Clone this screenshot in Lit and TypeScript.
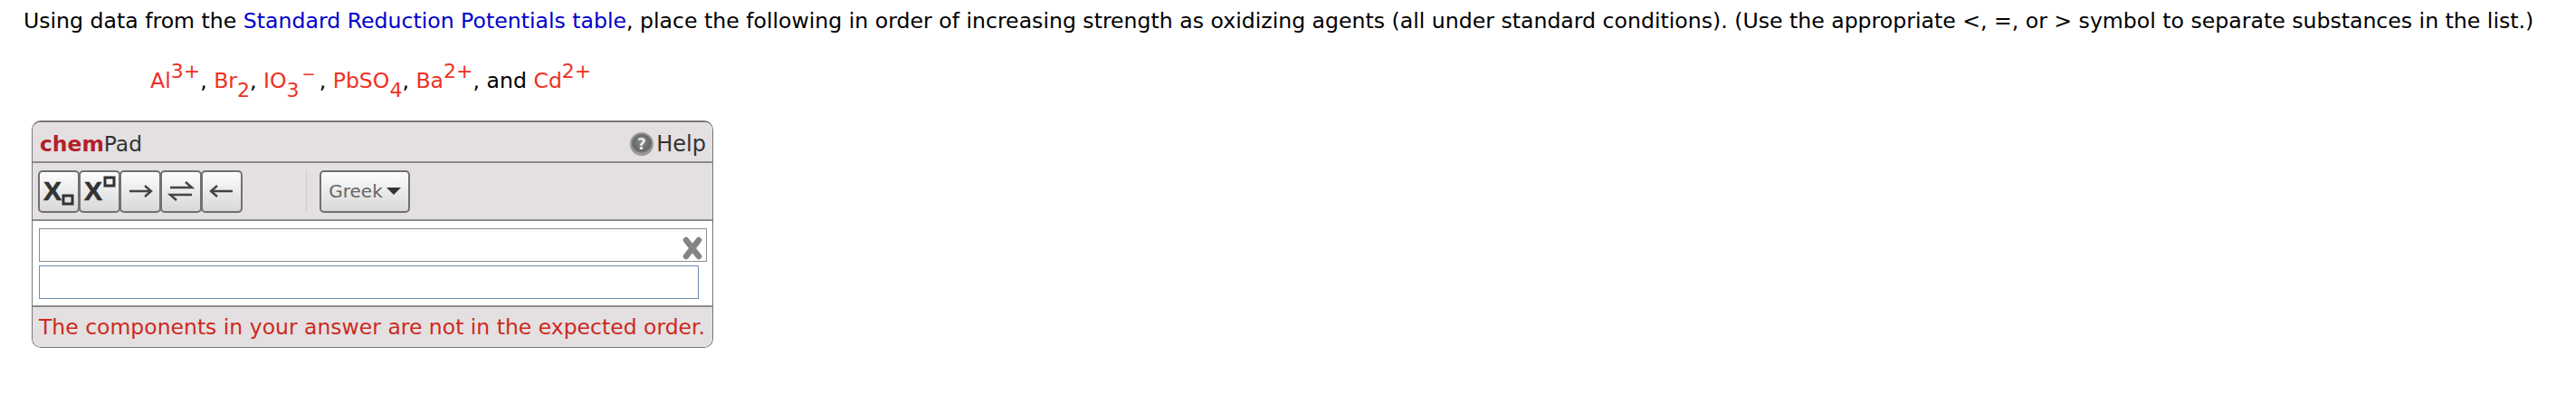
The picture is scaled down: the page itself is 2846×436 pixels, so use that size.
import { LitElement, html, css } from "lit";
import { customElement } from "lit/decorators.js";

@customElement("app-root")
export class AppRoot extends LitElement {
  static styles = css`
    :host { display: block; width: 2846px; height: 436px; background: #fff; color: #000; font-family: "DejaVu Sans", Verdana, sans-serif; font-size: 23.6px; overflow: hidden; }
    .question { margin: 0; padding: 8px 0 0 26px; line-height: 30px; white-space: nowrap; height: 38px; box-sizing: border-box; }
    .link { color: #0000cc; text-decoration: none; }
    .list { margin: 0; padding: 36px 0 0 166px; height: 95px; box-sizing: border-box; line-height: 30px; white-space: nowrap; }
    .r { color: #ee3124; }
    sup, sub { font-size: 22px; line-height: 0; }
    sup { vertical-align: 11px; }
    sub { vertical-align: -10px; }
    .minus { font-size: 18px; vertical-align: 9px; line-height: 0; margin-left: 3px; margin-right: 4px; }
    .panel { margin-left: 35px; width: 753px; box-sizing: border-box; border: 1px solid #777; border-top-width: 2px; border-radius: 10px; background: #fff; overflow: hidden; }
    .head { display: flex; align-items: center; justify-content: space-between; height: 45px; padding: 4px 7px 0 8px; box-sizing: border-box; background: #e4e0e2; border-bottom: 2px solid #8c8c8c; font-size: 23.4px; color: #333; }
    .head b { color: #b3202a; font-weight: 700; }
    .help { display: flex; align-items: center; gap: 3px; font-size: 24px; }
    .tools { display: flex; align-items: center; height: 64px; padding: 0 0 0 6px; background: #e4e0e2; border-bottom: 2px solid #8c8c8c; box-sizing: border-box; }
    .btn { width: 46px; height: 47px; box-sizing: border-box; border: 2px solid #707070; border-radius: 5px; margin-right: -1px; background: linear-gradient(#fdfdfd, #d8d8d8); display: flex; align-items: center; justify-content: center; color: #333; }
    .sep { width: 1px; height: 46px; background: #cfcbcd; margin: 0 14px 0 71px; }
    .greek { width: 100px; height: 47px; box-sizing: border-box; border: 2px solid #707070; border-radius: 5px; background: linear-gradient(#fdfdfd, #d8d8d8); display: flex; align-items: center; justify-content: center; gap: 4px; color: #666; font-size: 20px; }
    .caret { width: 0; height: 0; border: 8px solid transparent; border-top-color: #333; border-bottom-width: 0; }
    .inputs { padding: 8px 6px 7px 7px; display: flex; flex-direction: column; gap: 4px; }
    .math { height: 37px; box-sizing: border-box; border: 1px solid #8c8c8c; display: flex; justify-content: flex-end; align-items: flex-end; }
    .field { width: 729px; height: 37px; box-sizing: border-box; border: 1px solid #6f8fb4; }
    .msg { background: #e4e0e2; border-top: 2px solid #8c8c8c; color: #cc2a1c; font-size: 23.5px; line-height: 30px; padding: 7px 0 7px 7px; white-space: nowrap; }
  `;

  render() {
    const arrow = (d: string) => html`<svg width="30" height="30" viewBox="0 0 30 30" fill="none" stroke="#444" stroke-width="2.4"><path d=${d}></path></svg>`;
    return html`
      <p class="question">Using data from the <a class="link">Standard Reduction Potentials table</a>, place the following in order of increasing strength as oxidizing agents (all under standard conditions). (Use the appropriate &lt;, =, or &gt; symbol to separate substances in the list.)</p>
      <p class="list"><span class="r">Al<sup>3+</sup></span>, <span class="r">Br<sub>2</sub></span>, <span class="r">IO<sub>3</sub><span class="minus">−</span></span>, <span class="r">PbSO<sub>4</sub></span>, <span class="r">Ba<sup>2+</sup></span>, and <span class="r">Cd<sup>2+</sup></span></p>
      <div class="panel">
        <div class="head">
          <span><b>chem</b>Pad</span>
          <span class="help">
            <svg width="26" height="26" viewBox="0 0 26 26">
              <defs><radialGradient id="g" cx="50%" cy="40%" r="60%"><stop offset="0" stop-color="#888"></stop><stop offset="0.7" stop-color="#666"></stop><stop offset="1" stop-color="#b5b5b5"></stop></radialGradient></defs>
              <circle cx="13" cy="13" r="12" fill="url(#g)" stroke="#9a9a9a" stroke-width="2"></circle>
              <text x="13" y="19" text-anchor="middle" font-size="17" font-weight="700" fill="#e8e8e8" font-family="DejaVu Sans">?</text>
            </svg>
            Help
          </span>
        </div>
        <div class="tools">
          <span class="btn"><svg width="42" height="42" viewBox="0 0 42 42"><text x="4" y="31" font-size="30" font-weight="700" fill="#333" stroke="#333" stroke-width="0.6" font-family="Liberation Sans">X</text><rect x="26" y="26" width="10" height="9" fill="none" stroke="#333" stroke-width="3"></rect></svg></span>
          <span class="btn"><svg width="42" height="42" viewBox="0 0 42 42"><text x="4" y="31" font-size="30" font-weight="700" fill="#333" stroke="#333" stroke-width="0.6" font-family="Liberation Sans">X</text><rect x="27" y="6" width="10" height="9" fill="none" stroke="#333" stroke-width="3"></rect></svg></span>
          <span class="btn">${arrow("M3 15H27M20 9L27 15L20 21")}</span>
          <span class="btn">${arrow("M3 11H27L20 5M27 19H3L10 25")}</span>
          <span class="btn">${arrow("M27 15H3M10 9L3 15L10 21")}</span>
          <span class="sep"></span>
          <span class="greek">Greek<span class="caret"></span></span>
        </div>
        <div class="inputs">
          <div class="math"><svg width="28" height="28" viewBox="0 0 28 28" stroke="#858585" stroke-width="6.5" stroke-linecap="round"><path d="M6 5L20 23M20 5L6 23"></path></svg></div>
          <div class="field"></div>
        </div>
        <div class="msg">The components in your answer are not in the expected order.</div>
      </div>
    `;
  }
}
